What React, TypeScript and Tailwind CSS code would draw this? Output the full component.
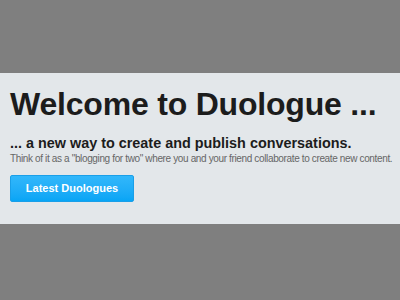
export default function App() {
  return (
    <div className="w-[400px] h-[300px] bg-[#7f7f7f] flex flex-col" style={{ fontFamily: '"Liberation Sans", Arial, sans-serif' }}>
      <div className="h-[73px]" />
      <div className="h-[151px] bg-[#e3e7ea] px-[10px] pt-[13px]">
        <h1 className="text-[32px] leading-[36px] font-bold text-[#1c1c1c] tracking-[-0.2px]">
          Welcome to Duologue ...
        </h1>
        <h2 className="mt-[12px] text-[14.4px] leading-[18px] font-bold text-[#1c1c1c]">
          ... a new way to create and publish conversations.
        </h2>
        <p className="text-[10px] leading-[14px] text-[#666] whitespace-nowrap tracking-[-0.36px]">
          Think of it as a &quot;blogging for two&quot; where you and your friend collaborate to create new content.
        </p>
        <button className="mt-[9px] w-[124px] h-[27px] rounded-[2px] bg-gradient-to-b from-[#31b7fb] to-[#07a5f5] border border-[#1a9fe8] text-white text-[11px] font-bold">
          Latest Duologues
        </button>
      </div>
    </div>
  )
}
